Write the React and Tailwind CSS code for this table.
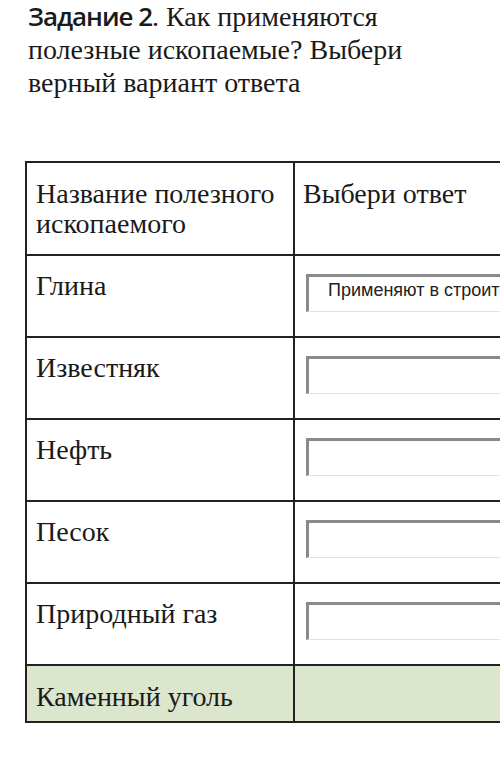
const rows = [
    { name: 'Глина', value: 'Применяют в строительстве' },
    { name: 'Известняк', value: '' },
    { name: 'Нефть', value: '' },
    { name: 'Песок', value: '' },
    { name: 'Природный газ', value: '' },
];

const serif = { fontFamily: '"Liberation Serif", "DejaVu Serif", serif' };

export default function App() {
    return (
        <div className="w-[500px] h-[763px] overflow-hidden bg-white text-[#1a1a1a]" style={serif}>
            <p className="pl-[28px] text-[28px] leading-[33px] whitespace-nowrap">
                <span className="font-semibold tracking-[-0.04em]" style={{ fontFamily: '"Open Sans", "Noto Sans", sans-serif', fontSize: '26px' }}>Задание 2</span>. Как применяются<br />
                полезные ископаемые? Выбери<br />
                верный вариант ответа
            </p>

            <div className="ml-[25px] mt-[62px] w-[560px] border-2 border-[#222]">
                <div className="flex h-[91px]">
                    <div className="w-[266px] shrink-0 pl-[9px] pt-4 text-[28px] leading-[30px]">Название полезного ископаемого</div>
                    <div className="flex-1 border-l-2 border-[#222] pl-[8px] pt-4 text-[28px] leading-[30px]">Выбери ответ</div>
                </div>

                {rows.map((row) => (
                    <div key={row.name} className="flex h-[82px] border-t-2 border-[#222]">
                        <div className="w-[266px] shrink-0 pl-[9px] pt-[15px] text-[28px] leading-[30px]">{row.name}</div>
                        <div className="flex-1 border-l-2 border-[#222] pl-[11px] pt-[18px]">
                            <div className="h-[38px] w-[260px] border-t-[3px] border-l-[3px] border-b border-r border-t-[#8a8a8a] border-l-[#8a8a8a] border-b-[#e2e2e2] border-r-[#e2e2e2] bg-white pl-[19px] pt-[3px] text-[18px] leading-[20px] text-[#222] whitespace-nowrap overflow-hidden" style={{ fontFamily: '"Liberation Sans", Arial, sans-serif' }}>
                                {row.value}
                            </div>
                        </div>
                    </div>
                ))}

                <div className="flex h-[57px] border-t-2 border-[#222] bg-[#dce6cd]">
                    <div className="w-[266px] shrink-0 pl-[9px] pt-[16px] text-[28px] leading-[30px]">Каменный уголь</div>
                    <div className="flex-1 border-l-2 border-[#222]"></div>
                </div>
            </div>
        </div>
    );
}
